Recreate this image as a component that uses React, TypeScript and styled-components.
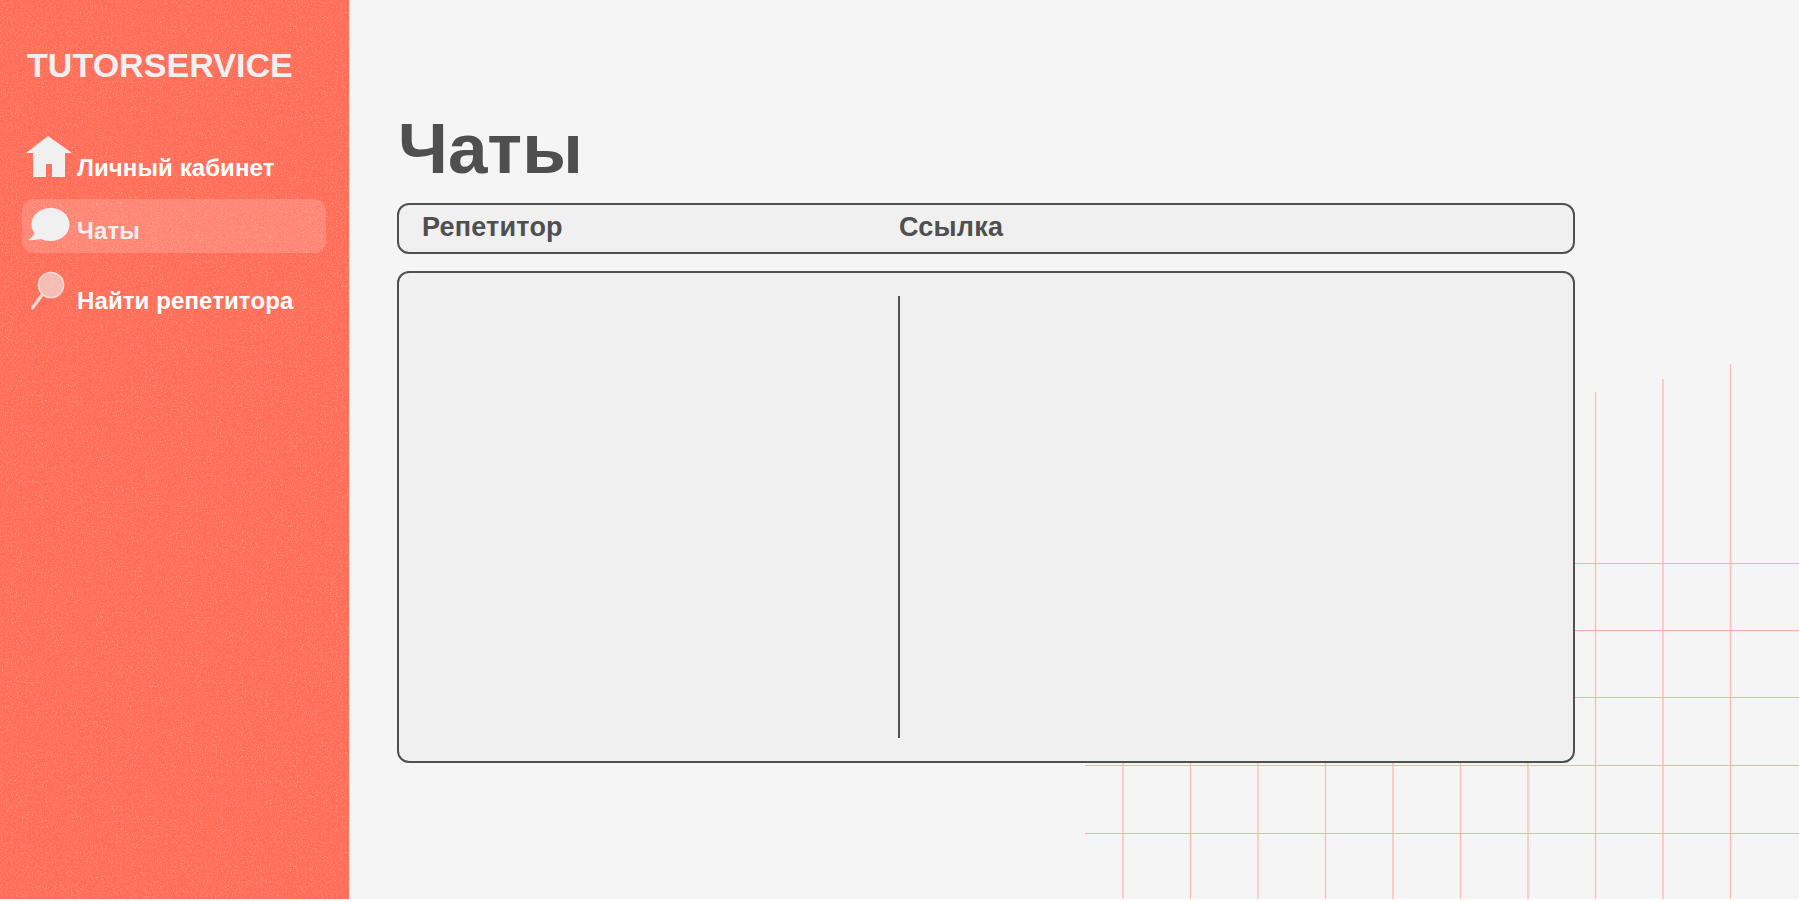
import { createGlobalStyle } from "styled-components";
import styled from "styled-components";

const noise =
  "data:image/svg+xml,%3Csvg xmlns='http://www.w3.org/2000/svg' width='420' height='420'%3E%3Cfilter id='n'%3E%3CfeTurbulence type='fractalNoise' baseFrequency='0.8' numOctaves='2' stitchTiles='stitch'/%3E%3CfeColorMatrix values='0 0 0 0 1 0 0 0 0 1 0 0 0 0 1 0 0 0 0.8 -0.42'/%3E%3C/filter%3E%3Crect width='420' height='420' filter='url(%23n)'/%3E%3C/svg%3E";

const GlobalStyle = createGlobalStyle`
  html, body {
    margin: 0;
    background: #fff;
    font-family: "Liberation Sans", Arial, sans-serif;
  }
`;

const Page = styled.div`
  display: flex;
  height: 899px;
  overflow: hidden;
`;

const Sidebar = styled.aside`
  width: 349px;
  flex-shrink: 0;
  box-sizing: border-box;
  padding: 47px 23px 0 22px;
  background-color: #ff6e58;
  background-image: url("${noise}");
`;

const Logo = styled.div`
  padding-left: 5px;
  font-size: 34px;
  line-height: 37px;
  font-weight: 700;
  letter-spacing: 0.05px;
  color: #f0f0f0;
`;

const Nav = styled.nav`
  display: flex;
  flex-direction: column;
  gap: 12px;
  margin-top: 49px;
`;

const NavItem = styled.a<{ $active?: boolean }>`
  display: flex;
  align-items: center;
  gap: 5px;
  height: 54px;
  padding-left: 4px;
  border-radius: 12px;
  font-size: 24px;
  font-weight: 700;
  letter-spacing: 0.1px;
  color: ${(p) => (p.$active ? "#f0f0f0" : "#fff")};
  background: ${(p) => (p.$active ? "rgba(255, 255, 255, 0.17)" : "transparent")};
`;

const NavIcon = styled.svg<{ $shift: number }>`
  flex-shrink: 0;
  width: 46px;
  height: 46px;
  transform: translateY(${(p) => p.$shift}px);
`;

const NavLabel = styled.span<{ $drop: number }>`
  padding-top: ${(p) => p.$drop}px;
  white-space: nowrap;
`;

const Main = styled.main`
  position: relative;
  flex: 1;
  box-sizing: border-box;
  padding: 108px 224px 0 48px;
  background: #f5f5f5;
`;

const GridArt = styled.svg`
  position: absolute;
  right: 0;
  bottom: 0;
`;

const Title = styled.h1`
  position: relative;
  margin: 0 0 14px;
  padding-left: 1px;
  font-size: 71px;
  line-height: 81px;
  font-weight: 700;
  color: #4f4f4f;
`;

const Panel = styled.div`
  position: relative;
  box-sizing: border-box;
  border: 2px solid #505050;
  border-radius: 12px;
  background: #f0f0f0;
`;

const HeadRow = styled(Panel)`
  display: grid;
  grid-template-columns: 477px 1fr;
  align-items: center;
  height: 51px;
  padding: 0 22px 2px 23px;
  margin-bottom: 17px;
  font-size: 27px;
  font-weight: 700;
  letter-spacing: 0.2px;
  color: #4f4f4f;
`;

const Body = styled(Panel)`
  display: grid;
  grid-template-columns: 477px 1fr;
  height: 492px;
  padding: 23px 22px;
`;

const Column = styled.div`
  & + & {
    border-left: 2px solid #505050;
  }
`;

const verticals = [1123, 1190.5, 1258, 1325.5, 1393, 1460.5, 1528, 1595.5, 1663, 1730.5];
const tops: Record<number, number> = { 1595.5: 392, 1663: 379, 1730.5: 364 };
const horizontals = [563.5, 630.5, 697.5, 765.5, 833.5];

function Grid() {
  return (
    <GridArt width="714" height="535" viewBox="1085 364 714 535">
      {verticals.map((x) => (
        <line key={x} x1={x} x2={x} y1={tops[x] ?? 500} y2={899} stroke="#ffbdb6" strokeWidth="1.4" />
      ))}
      {horizontals.map((y) => (
        <line key={y} x1={1085} x2={1799} y1={y} y2={y} stroke="#ffaea5" strokeWidth="1" />
      ))}
    </GridArt>
  );
}

function HomeIcon() {
  return (
    <NavIcon $shift={-3} viewBox="0 0 46 46">
      <path d="M22 2 L46 19 H39 V43 H26 V30 H20 V43 H7 V19 H0 Z" fill="#f0f0f0" />
    </NavIcon>
  );
}

function ChatIcon() {
  return (
    <NavIcon $shift={3} viewBox="0 0 46 46">
      <path
        d="M24.5 2 C35 2 43.5 9 43.5 18.5 C43.5 28 35 35 24.5 35 C20.5 35 17.5 34 15 33 C11 34 6 34.5 2 34 C5 32 7.5 30 8.5 27 C6.5 24.5 5.5 21.5 5.5 18.5 C5.5 9 14 2 24.5 2 Z"
        fill="#f0f0f0"
      />
    </NavIcon>
  );
}

function SearchIcon() {
  return (
    <NavIcon $shift={-1} viewBox="0 0 46 46">
      <circle cx="25" cy="17" r="12.5" fill="#f0f0f0" fillOpacity="0.6" stroke="#f3dcd8" strokeWidth="1.6" />
      <line x1="16" y1="27" x2="6.5" y2="40" stroke="#f3dcd8" strokeWidth="3" strokeLinecap="round" />
    </NavIcon>
  );
}

export default function App() {
  return (
    <>
      <GlobalStyle />
      <Page>
        <Sidebar>
          <Logo>TUTORSERVICE</Logo>
          <Nav>
            <NavItem>
              <HomeIcon />
              <NavLabel $drop={15}>Личный кабинет</NavLabel>
            </NavItem>
            <NavItem $active>
              <ChatIcon />
              <NavLabel $drop={10}>Чаты</NavLabel>
            </NavItem>
            <NavItem>
              <SearchIcon />
              <NavLabel $drop={18}>Найти репетитора</NavLabel>
            </NavItem>
          </Nav>
        </Sidebar>
        <Main>
          <Grid />
          <Title>Чаты</Title>
          <HeadRow>
            <span>Репетитор</span>
            <span>Ссылка</span>
          </HeadRow>
          <Body>
            <Column />
            <Column />
          </Body>
        </Main>
      </Page>
    </>
  );
}
